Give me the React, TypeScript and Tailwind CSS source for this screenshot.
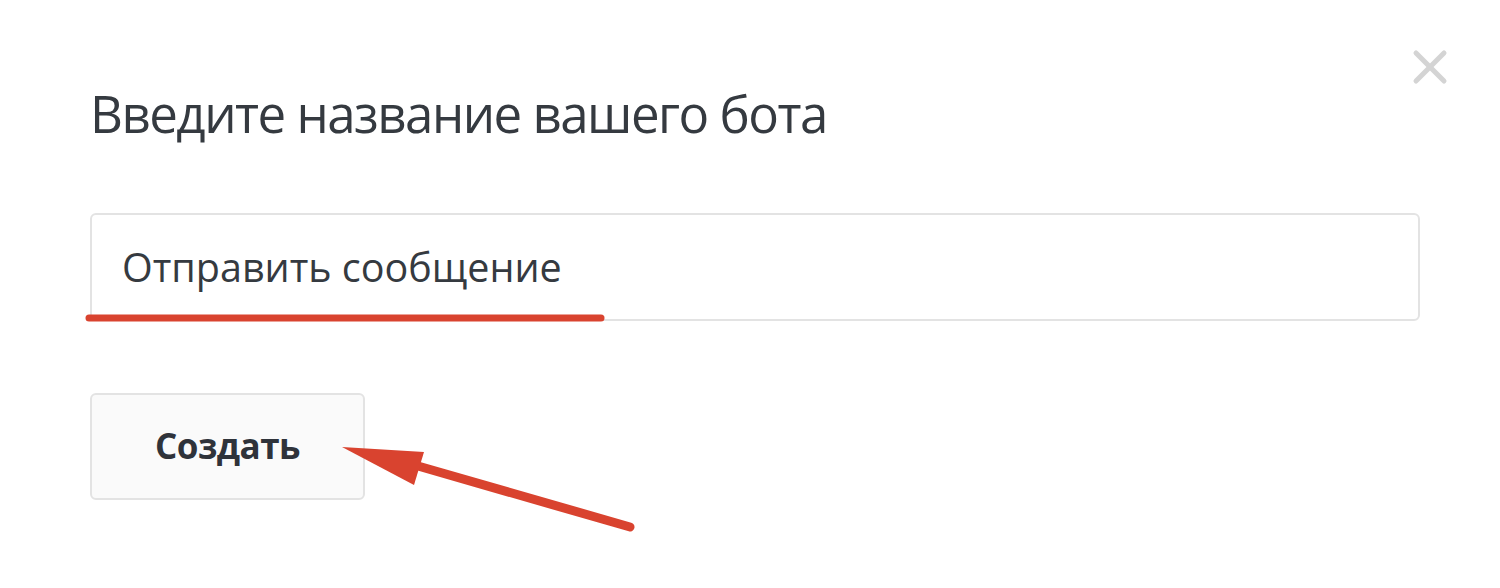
import { useState } from 'react';

export default function App() {
    const [name, setName] = useState('Отправить сообщение');

    return (
        <div className="relative w-[1500px] h-[588px] bg-white overflow-hidden" style={{ fontFamily: '"Open Sans", "Noto Sans", sans-serif' }}>
            {/* close */}
            <button className="absolute left-[1411px] top-[48px] w-[38px] h-[38px] flex items-center justify-center">
                <svg width="36" height="36" viewBox="0 0 36 36" fill="none" stroke="#d4d4d4" strokeWidth="5" strokeLinecap="round">
                    <path d="M4 4 L32 32" />
                    <path d="M32 4 L4 32" />
                </svg>
            </button>

            <div className="flex flex-col pl-[90px] pr-[80px] pt-[78px]">
                <h2 className="text-[51px] leading-[70px] font-normal text-[#353a40] tracking-[-1.5px]">
                    Введите название вашего бота
                </h2>

                <input
                    value={name}
                    onChange={(e) => setName(e.target.value)}
                    className="mt-[65px] h-[108px] w-full rounded-[6px] border-2 border-[#e3e3e3] bg-white px-[30px] text-[39.5px] text-[#353a40] outline-none"
                />

                <button className="mt-[72px] w-[275px] h-[107px] rounded-[6px] border-2 border-[#e3e3e3] bg-[#fafafa] text-[35px] font-bold text-[#2f333a] tracking-[-0.5px]">
                    Создать
                </button>
            </div>

            {/* annotation marks */}
            <svg className="absolute inset-0 pointer-events-none" width="1500" height="588" viewBox="0 0 1500 588">
                <line x1="89" y1="318" x2="601" y2="318" stroke="#d9432f" strokeWidth="7" strokeLinecap="round" />
                <path d="M630 527 L418 466" stroke="#d9432f" strokeWidth="9" strokeLinecap="round" />
                <polygon points="342,447 424,452 414,485" fill="#d9432f" />
            </svg>
        </div>
    );
}
